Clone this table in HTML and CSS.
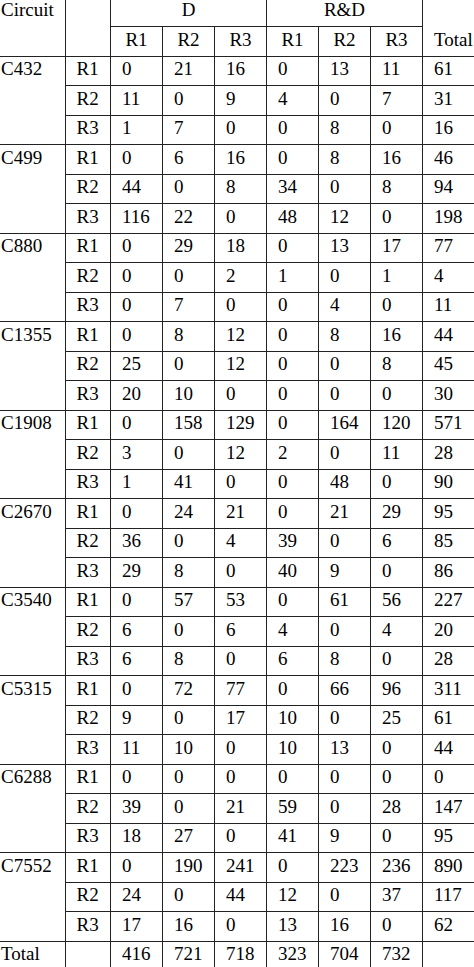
FILE: index.html
```html
<!DOCTYPE html>
<html>
<head>
<meta charset="utf-8">
<link rel="stylesheet" href="styles.css">
</head>
<body>
<table class="tbl">
<colgroup>
<col class="c-circ"><col class="c-run"><col class="c-n"><col class="c-n"><col class="c-n"><col class="c-n"><col class="c-n"><col class="c-n"><col class="c-tot">
</colgroup>
<thead>
<tr><th class="circ" rowspan="2">Circuit</th><th rowspan="2"></th><th class="ctr" colspan="3">D</th><th class="ctr" colspan="3">R&amp;D</th><th class="tot-h" rowspan="2">Total</th></tr>
<tr><th class="ctr">R1</th><th class="ctr">R2</th><th class="ctr">R3</th><th class="ctr">R1</th><th class="ctr">R2</th><th class="ctr">R3</th></tr>
</thead>
<tbody>
<tr><td class="circ" rowspan="3">C432</td><td>R1</td><td>0</td><td>21</td><td>16</td><td>0</td><td>13</td><td>11</td><td>61</td></tr>
<tr><td>R2</td><td>11</td><td>0</td><td>9</td><td>4</td><td>0</td><td>7</td><td>31</td></tr>
<tr><td>R3</td><td>1</td><td>7</td><td>0</td><td>0</td><td>8</td><td>0</td><td>16</td></tr>
<tr><td class="circ" rowspan="3">C499</td><td>R1</td><td>0</td><td>6</td><td>16</td><td>0</td><td>8</td><td>16</td><td>46</td></tr>
<tr><td>R2</td><td>44</td><td>0</td><td>8</td><td>34</td><td>0</td><td>8</td><td>94</td></tr>
<tr><td>R3</td><td>116</td><td>22</td><td>0</td><td>48</td><td>12</td><td>0</td><td>198</td></tr>
<tr><td class="circ" rowspan="3">C880</td><td>R1</td><td>0</td><td>29</td><td>18</td><td>0</td><td>13</td><td>17</td><td>77</td></tr>
<tr><td>R2</td><td>0</td><td>0</td><td>2</td><td>1</td><td>0</td><td>1</td><td>4</td></tr>
<tr><td>R3</td><td>0</td><td>7</td><td>0</td><td>0</td><td>4</td><td>0</td><td>11</td></tr>
<tr><td class="circ" rowspan="3">C1355</td><td>R1</td><td>0</td><td>8</td><td>12</td><td>0</td><td>8</td><td>16</td><td>44</td></tr>
<tr><td>R2</td><td>25</td><td>0</td><td>12</td><td>0</td><td>0</td><td>8</td><td>45</td></tr>
<tr><td>R3</td><td>20</td><td>10</td><td>0</td><td>0</td><td>0</td><td>0</td><td>30</td></tr>
<tr><td class="circ" rowspan="3">C1908</td><td>R1</td><td>0</td><td>158</td><td>129</td><td>0</td><td>164</td><td>120</td><td>571</td></tr>
<tr><td>R2</td><td>3</td><td>0</td><td>12</td><td>2</td><td>0</td><td>11</td><td>28</td></tr>
<tr><td>R3</td><td>1</td><td>41</td><td>0</td><td>0</td><td>48</td><td>0</td><td>90</td></tr>
<tr><td class="circ" rowspan="3">C2670</td><td>R1</td><td>0</td><td>24</td><td>21</td><td>0</td><td>21</td><td>29</td><td>95</td></tr>
<tr><td>R2</td><td>36</td><td>0</td><td>4</td><td>39</td><td>0</td><td>6</td><td>85</td></tr>
<tr><td>R3</td><td>29</td><td>8</td><td>0</td><td>40</td><td>9</td><td>0</td><td>86</td></tr>
<tr><td class="circ" rowspan="3">C3540</td><td>R1</td><td>0</td><td>57</td><td>53</td><td>0</td><td>61</td><td>56</td><td>227</td></tr>
<tr><td>R2</td><td>6</td><td>0</td><td>6</td><td>4</td><td>0</td><td>4</td><td>20</td></tr>
<tr><td>R3</td><td>6</td><td>8</td><td>0</td><td>6</td><td>8</td><td>0</td><td>28</td></tr>
<tr><td class="circ" rowspan="3">C5315</td><td>R1</td><td>0</td><td>72</td><td>77</td><td>0</td><td>66</td><td>96</td><td>311</td></tr>
<tr><td>R2</td><td>9</td><td>0</td><td>17</td><td>10</td><td>0</td><td>25</td><td>61</td></tr>
<tr><td>R3</td><td>11</td><td>10</td><td>0</td><td>10</td><td>13</td><td>0</td><td>44</td></tr>
<tr><td class="circ" rowspan="3">C6288</td><td>R1</td><td>0</td><td>0</td><td>0</td><td>0</td><td>0</td><td>0</td><td>0</td></tr>
<tr><td>R2</td><td>39</td><td>0</td><td>21</td><td>59</td><td>0</td><td>28</td><td>147</td></tr>
<tr><td>R3</td><td>18</td><td>27</td><td>0</td><td>41</td><td>9</td><td>0</td><td>95</td></tr>
<tr><td class="circ" rowspan="3">C7552</td><td>R1</td><td>0</td><td>190</td><td>241</td><td>0</td><td>223</td><td>236</td><td>890</td></tr>
<tr><td>R2</td><td>24</td><td>0</td><td>44</td><td>12</td><td>0</td><td>37</td><td>117</td></tr>
<tr><td>R3</td><td>17</td><td>16</td><td>0</td><td>13</td><td>16</td><td>0</td><td>62</td></tr>
<tr><td class="circ">Total</td><td></td><td>416</td><td>721</td><td>718</td><td>323</td><td>704</td><td>732</td><td></td></tr>
</tbody>
</table>
</body>
</html>
```

FILE: styles.css
```css
html, body {
  margin: 0;
  padding: 0;
  background: #fff;
  overflow: hidden;
}

.tbl {
  border-collapse: collapse;
  table-layout: fixed;
  width: 478px;
  margin-left: -2px;
  margin-top: -3.5px;
  font-family: "Liberation Serif", "Times New Roman", serif;
  font-size: 19px;
  color: #000;
}

.c-circ { width: 66.5px; }
.c-run { width: 45.5px; }
.c-n { width: 52px; }
.c-tot { width: 54px; }

.tbl tr {
  height: 29.5px;
}

.tbl th,
.tbl td {
  border: 1.5px solid #222;
  padding: 2.5px 0 0 11px;
  line-height: 20px;
  font-weight: normal;
  text-align: left;
  vertical-align: top;
  white-space: nowrap;
  overflow: hidden;
}

.tbl .circ {
  padding-left: 2px;
}

.tbl .ctr {
  text-align: center;
  padding-left: 0;
}

.tbl .tot-h {
  padding-top: 32px;
}
```
